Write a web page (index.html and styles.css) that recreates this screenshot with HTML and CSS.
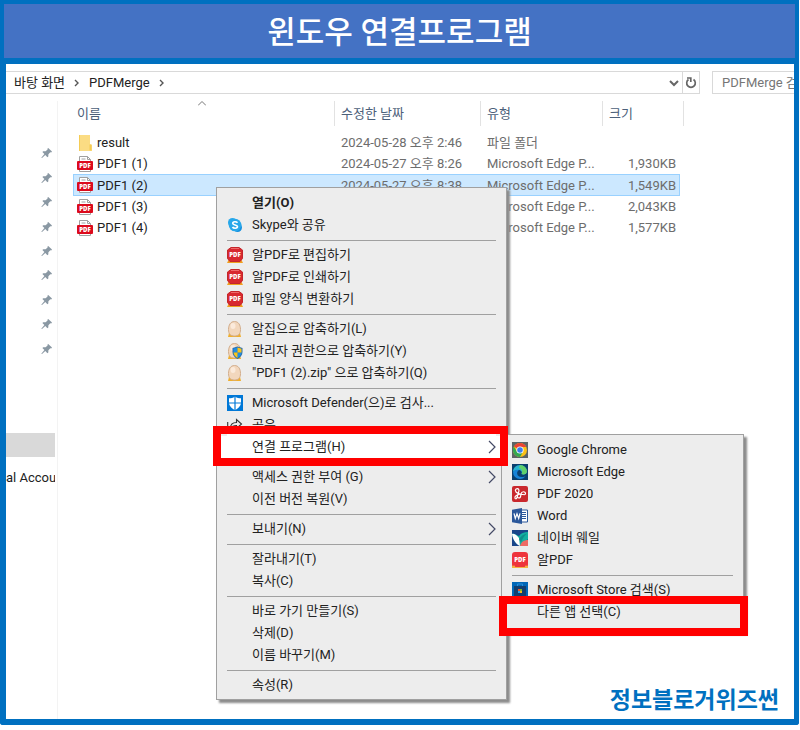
FILE: index.html
```html
<!DOCTYPE html>
<html lang="ko">
<head>
    <meta charset="UTF-8">
    <meta name="viewport" content="width=device-width, initial-scale=1.0">
    <title>윈도우 연결프로그램</title>
    <link rel="stylesheet" href="styles.css">
</head>
<body>
    <!-- Shared icons -->
    <svg class="sprite" aria-hidden="true">
        <symbol id="pin" viewBox="0 0 12 12">
            <path d="M7.2 1 11 4.600 10.200 5.400 9.300 5.200 7.400 7.200 7.300 9.500 6.400 10.200 4.300 8 1 11 .5 11 .5 10.500 3.400 7.100 1.400 5 2.200 4.200 4.600 4.300 6.600 2.500 6.400 1.700Z" fill="#8a98a3"/>
        </symbol>
        <symbol id="pdf-file" viewBox="0 0 16 16">
            <path d="M2.500.5h8l3 3v12h-11z" fill="#fff" stroke="#a0a0a0"/>
            <path d="M10.500.5v3h3M4.500 3h4" fill="none" stroke="#a0a0a0"/>
            <rect y="5" width="16" height="9" rx="1" fill="#dc0a1c"/>
            <text x="8" y="12" class="icon-text">PDF</text>
        </symbol>
        <symbol id="alpdf" viewBox="0 0 16 16">
            <path d="M0 16 2 12h12l2 4z" fill="#f0a020"/>
            <path d="M4 .5h8L15.500 3v8.500L13 14.500H3L.5 11.500V3z" fill="#d8292f" stroke="#c4262b"/>
            <path d="M4 1.500h8" stroke="#ef6a6a"/>
            <text x="8" y="10" class="icon-text">PDF</text>
        </symbol>
        <symbol id="egg" viewBox="0 0 16 16">
            <path d="M1 16 2 12h11l1 4z" fill="#f0ae2c"/>
            <path d="M7.500.5C11.500.5 13.500 4 13.500 8.500S11.500 15 7.500 15 1.500 13 1.500 8.500 3.500.5 7.500.5z" fill="#f2d7bd" stroke="#d3ae8d"/>
            <ellipse cx="6" cy="5" rx="2.500" ry="3" fill="#fbeadb"/>
        </symbol>
        <symbol id="arrow" viewBox="0 0 8 14">
            <path d="M1 1l6 6-6 6" fill="none" stroke="#444a66" stroke-width="1.200"/>
        </symbol>
    </svg>

    <header class="title-bar">
        <h1>윈도우 연결프로그램</h1>
    </header>

    <main class="explorer">
        <div class="toolbar">
            <nav class="address" aria-label="경로">
                <a href="#">바탕 화면</a>
                <svg class="crumb" viewBox="0 0 6 8"><path d="M1 1l3 3-3 3" fill="none" stroke="#555" stroke-width="1.400"/></svg>
                <a href="#">PDFMerge</a>
                <svg class="crumb" viewBox="0 0 6 8"><path d="M1 1l3 3-3 3" fill="none" stroke="#555" stroke-width="1.400"/></svg>
                <button class="history" aria-label="이전 위치">
                    <svg width="10" height="8" viewBox="0 0 10 8"><path d="M1 2l4 4 4-4" fill="none" stroke="#666" stroke-width="2"/></svg>
                </button>
                <button class="refresh" aria-label="새로 고침">
                    <svg width="12" height="13" viewBox="0 0 12 13"><path d="M8.500 3.500a4.300 4.300 0 1 1-5 0M2 2h3.800v4" fill="none" stroke="#666" stroke-width="1.700"/></svg>
                </button>
            </nav>
            <input class="search" type="text" placeholder="PDFMerge 검색" aria-label="PDFMerge 검색">
        </div>

        <div class="content">
            <aside class="sidebar">
                <ul class="pins">
                    <li><svg><use href="#pin"/></svg></li>
                    <li><svg><use href="#pin"/></svg></li>
                    <li><svg><use href="#pin"/></svg></li>
                    <li><svg><use href="#pin"/></svg></li>
                    <li><svg><use href="#pin"/></svg></li>
                    <li><svg><use href="#pin"/></svg></li>
                    <li><svg><use href="#pin"/></svg></li>
                    <li><svg><use href="#pin"/></svg></li>
                    <li><svg><use href="#pin"/></svg></li>
                </ul>
                <div class="current"></div>
                <a class="account" href="#">al Account</a>
            </aside>

            <div class="files">
                <table>
                    <thead>
                        <tr>
                            <th class="col-name">이름
                                <svg class="sort" viewBox="0 0 8 5"><path d="M0 4.500l4-4 4 4" fill="none" stroke="#777"/></svg>
                            </th>
                            <th class="col-date">수정한 날짜</th>
                            <th class="col-type">유형</th>
                            <th class="col-size">크기</th>
                            <th class="col-end"></th>
                        </tr>
                    </thead>
                    <tbody>
                        <tr>
                            <td><span class="name"><svg viewBox="0 0 16 16"><path d="M2 0h11v9l2 1v6H2z" fill="#fbdc83"/><path d="M2 0h1v16H2zM12.500 9.500h2v6h-2z" fill="#f5cc55"/></svg>result</span></td>
                            <td>2024-05-28 오후 2:46</td>
                            <td>파일 폴더</td>
                            <td></td>
                        </tr>
                        <tr>
                            <td><span class="name"><svg><use href="#pdf-file"/></svg>PDF1 (1)</span></td>
                            <td>2024-05-27 오후 8:26</td>
                            <td>Microsoft Edge P...</td>
                            <td class="size">1,930KB</td>
                        </tr>
                        <tr class="selected">
                            <td><span class="name"><svg><use href="#pdf-file"/></svg>PDF1 (2)</span></td>
                            <td>2024-05-27 오후 8:38</td>
                            <td>Microsoft Edge P...</td>
                            <td class="size">1,549KB</td>
                        </tr>
                        <tr>
                            <td><span class="name"><svg><use href="#pdf-file"/></svg>PDF1 (3)</span></td>
                            <td></td>
                            <td>Microsoft Edge P...</td>
                            <td class="size">2,043KB</td>
                        </tr>
                        <tr>
                            <td><span class="name"><svg><use href="#pdf-file"/></svg>PDF1 (4)</span></td>
                            <td></td>
                            <td>Microsoft Edge P...</td>
                            <td class="size">1,577KB</td>
                        </tr>
                    </tbody>
                </table>
            </div>
        </div>
        <p class="signature">정보블로거위즈썬</p>
    </main>

    <!-- Context menu -->
    <div class="menu menu-main">
        <button class="item default"><span class="icon"></span>열기(O)</button>
        <button class="item">
            <svg class="icon" viewBox="0 0 16 16"><circle cx="5.500" cy="5.500" r="4.500" fill="#28a8ea"/><circle cx="10.500" cy="10.500" r="4.500" fill="#1490df"/><circle cx="8" cy="8" r="6.300" fill="#28a8ea"/><path d="M10.500 5.800C9.500 4.300 5.700 4.300 5.700 6.300c0 2 4.800 1.200 4.800 3.300 0 2-4 2.100-5 .4" fill="none" stroke="#fff" stroke-width="1.600"/></svg>
            Skype와 공유
        </button>
        <hr>
        <button class="item"><svg class="icon"><use href="#alpdf"/></svg>알PDF로 편집하기</button>
        <button class="item"><svg class="icon"><use href="#alpdf"/></svg>알PDF로 인쇄하기</button>
        <button class="item"><svg class="icon"><use href="#alpdf"/></svg>파일 양식 변환하기</button>
        <hr>
        <button class="item"><svg class="icon"><use href="#egg"/></svg>알집으로 압축하기(L)</button>
        <button class="item">
            <svg class="icon" viewBox="0 0 16 16"><use href="#egg"/><path d="M10.500 3.500l5 1.500v4c0 3-2 5.500-5 7-3-1.500-5-4-5-7V5z" fill="#2a6fb0"/><path d="M10.500 4.500V9.500H6.500V5.700zM10.500 9.500h4c-.3 2.500-2 4.300-4 5.500z" fill="#1f8fe6"/><path d="M10.500 4.500V9.500h4V5.700zM10.500 9.500h-4c.3 2.500 2 4.300 4 5.500z" fill="#f8c51c"/></svg>
            관리자 권한으로 압축하기(Y)
        </button>
        <button class="item"><svg class="icon"><use href="#egg"/></svg>"PDF1 (2).zip" 으로 압축하기(Q)</button>
        <hr>
        <button class="item">
            <svg class="icon" viewBox="0 0 16 16"><path d="M0 0h16v16H0z" fill="#0078d7"/><path d="M8 1.500c2 1.500 4 1.800 6 1.800v4.200c0 3.500-3 6-6 7.500-3-1.500-6-4-6-7.500V3.300c2 0 4-.3 6-1.800z" fill="#fff"/><path d="M8 1v14M1.500 8h13" stroke="#0078d7" stroke-width="1.200"/></svg>
            Microsoft Defender(으)로 검사...
        </button>
        <button class="item">
            <svg class="icon" viewBox="0 0 16 16"><path d="M.7 5v10.300h11V12M3.500 11c0-4 2.500-5.500 6-5.500V2.500L14.500 7l-5 4.500v-3c-3 0-4.500.5-6 2.500z" fill="none" stroke="#333" stroke-width="1.100"/></svg>
            공유
        </button>
        <button class="item open"><span class="icon"></span>연결 프로그램(H)<svg class="more"><use href="#arrow"/></svg></button>
        <hr>
        <button class="item"><span class="icon"></span>액세스 권한 부여 (G)<svg class="more"><use href="#arrow"/></svg></button>
        <button class="item"><span class="icon"></span>이전 버전 복원(V)</button>
        <hr>
        <button class="item"><span class="icon"></span>보내기(N)<svg class="more"><use href="#arrow"/></svg></button>
        <hr>
        <button class="item"><span class="icon"></span>잘라내기(T)</button>
        <button class="item"><span class="icon"></span>복사(C)</button>
        <hr>
        <button class="item"><span class="icon"></span>바로 가기 만들기(S)</button>
        <button class="item"><span class="icon"></span>삭제(D)</button>
        <button class="item"><span class="icon"></span>이름 바꾸기(M)</button>
        <hr>
        <button class="item"><span class="icon"></span>속성(R)</button>
    </div>

    <!-- Open with -->
    <div class="menu menu-sub">
        <button class="item">
            <svg class="icon" viewBox="0 0 16 16"><path d="M0 0h16v16H0z" fill="#5d6466"/><circle cx="8" cy="8" r="7" fill="#fbc116"/><path d="M8 8 1.900 4.500A7 7 0 0 1 14.100 4.500L14 5H8z" fill="#ea4335"/><path d="M1.900 4.500A7 7 0 0 0 8 15l3-5.300L5 9.700z" fill="#34a853"/><circle cx="8" cy="8" r="3.600" fill="#fff"/><circle cx="8" cy="8" r="2.800" fill="#3b7ded"/></svg>
            Google Chrome
        </button>
        <button class="item">
            <svg class="icon" viewBox="0 0 16 16"><path d="M0 0h16v16H0z" fill="#0a3f6e"/><path d="M1 8C1 4 4 1 8 1s7 3 7 6.500c0 3-4 3.500-5.500 2.500C10.500 8 9 6 6.500 6 4 6 1.500 7 1 8z" fill="#27b3cf"/><path d="M8 1c4 0 7 3 7 6.500 0 3-4 3.500-5.500 2.500C11 8 10 5 7 4z" fill="#5fd06a"/><path d="M1 8c.5-1.500 3-3 6-2-3 1.500-2.500 7 2.500 7 2 0 3.500-.5 4.500-1.500C12.500 14 10.500 15 8 15a7 7 0 0 1-7-7z" fill="#1683d8"/></svg>
            Microsoft Edge
        </button>
        <button class="item">
            <svg class="icon" viewBox="0 0 16 16"><rect width="16" height="16" rx="2" fill="#c9282d"/><path d="M4 3c3-1 3.500 1 2.500 3.500L5 11.500c-.6 2-2.500 1.500-2-.5.5-1.500 3-2.500 6-3M4 3c-1.800 2 .5 4.300 4 5 3 .6 5.500 1.500 5.500-.5 0-2.300-4-2.500-4.500.5-.5 2 0 4-2 4-1.500 0-2-1.500-1.500-3" fill="none" stroke="#fff" stroke-width="1.200"/></svg>
            PDF 2020
        </button>
        <button class="item">
            <svg class="icon" viewBox="0 0 16 16"><path d="M9 2h6.500v12H9z" fill="#fff" stroke="#2b579a"/><path d="M10 4.500h4M10 6.500h4M10 8.500h4M10 10.500h4" stroke="#2b579a"/><path d="M0 1.800 10 0v16L0 14.200z" fill="#2b579a"/><path d="M2 5.300l1.300 5.200L5 5.800l1.700 4.700L8 5.300" fill="none" stroke="#fff" stroke-width="1.200"/></svg>
            Word
        </button>
        <button class="item">
            <svg class="icon" viewBox="0 0 16 16"><path d="M0 0h16v16H0z" fill="#19468a"/><path d="M0 4c3-1 5 2 7 2 2-3 5-4 9-4v7L9 16C4 14 1 10 0 4z" fill="#12b0a0"/><path d="M0 4c3-1 5 2 7 4l1 8C4 14 1 10 0 4z" fill="#fff"/><path d="M7 9c2-3 5-5 8-5.500-3 2.500-5 6-6 9z" fill="#0d8f8a"/><path d="M8 16c1-4 4-6 8-6v6z" fill="#ee6b65"/></svg>
            네이버 웨일
        </button>
        <button class="item">
            <svg class="icon" viewBox="0 0 16 16"><path d="M0 12h16v4H0z" fill="#f5b544"/><rect width="16" height="15" rx="3" fill="#ee343c"/><path d="M0 16l2-3 2 3zM12 16l2-3 2 3z" fill="#f5b544"/><text x="8" y="10" class="icon-text">PDF</text></svg>
            알PDF
        </button>
        <hr>
        <button class="item">
            <svg class="icon" viewBox="0 0 16 16"><path d="M0 0h16v16H0z" fill="#0067b8"/><path d="M2 4h12v12H2z" fill="#123e70"/><path d="M5.500 4V2h5v2" fill="none" stroke="#2a8fd8"/><path d="M6 7h2v2H6z" fill="#e8562a"/><path d="M8 7h2v2H8z" fill="#80b82a"/><path d="M6 9h2v2H6z" fill="#2aa1e8"/><path d="M8 9h2v2H8z" fill="#f5ba19"/></svg>
            Microsoft Store 검색(S)
        </button>
        <button class="item"><span class="icon"></span>다른 앱 선택(C)</button>
    </div>

    <!-- Red marks around the two steps -->
    <div class="mark mark-open-with"></div>
    <div class="mark mark-other-app"></div>
</body>
</html>
```
FILE: styles.css
```css
* {
    box-sizing: border-box;
}
body {
    position: relative;
    display: flex;
    flex-direction: column;
    min-height: 100vh;
    margin: 0;
    padding: 0 1px 5px 0;
    background: #fff;
    color: #222;
    font-family: Roboto, "Noto Sans CJK KR", sans-serif;
    font-size: 13px;
    line-height: 20px;
}
a {
    color: inherit;
    text-decoration: none;
}
button {
    padding: 0;
    border: none;
    background: none;
    color: inherit;
    font: inherit;
}
svg {
    flex: none;
}
.sprite {
    display: none;
}
.icon-text {
    fill: #fff;
    font-family: "Open Sans", sans-serif;
    font-size: 6px;
    font-weight: 800;
    text-anchor: middle;
}

/* Title */
.title-bar {
    padding: 7px 0 3px;
    border: 4px solid #0070c0;
    border-bottom-width: 6px;
    background: #4472c4;
    text-align: center;
}
.title-bar h1 {
    margin: 0;
    color: #fff;
    font-size: 31px;
    font-weight: 500;
    line-height: 44px;
}

/* Explorer window */
.explorer {
    position: relative;
    display: flex;
    flex: 1;
    flex-direction: column;
    border: 6px solid #0070c0;
    border-top: none;
    border-right-width: 5px;
    border-radius: 0 0 3px 3px;
    overflow: hidden;
}
.toolbar {
    display: flex;
    gap: 12px;
    padding-top: 7px;
}
.address {
    display: flex;
    flex: 1;
    align-items: center;
    gap: 9px;
    height: 23px;
    padding-left: 8px;
    border: 1px solid #d9d9d9;
    border-left: none;
}
.crumb {
    width: 6px;
    height: 8px;
}
.history {
    display: flex;
    margin-left: auto;
    margin-right: -6px;
}
.refresh {
    display: flex;
    align-items: center;
    justify-content: center;
    width: 17px;
    height: 21px;
    border-left: 1px solid #d9d9d9;
}
.search {
    width: 82px;
    height: 23px;
    padding: 0 0 0 9px;
    border: 1px solid #d9d9d9;
    border-right: none;
    font: inherit;
}
.search::placeholder {
    color: #767676;
}
.content {
    display: flex;
    flex: 1;
    padding-top: 7px;
}

/* Navigation pane */
.sidebar {
    width: 52px;
    padding-top: 40px;
    border-right: 1px solid #f3f3f3;
}
.pins {
    display: flex;
    flex-direction: column;
    height: 220px;
    margin: 0;
    padding: 0 4px 0 0;
    list-style: none;
}
.pins li {
    display: flex;
    flex: 1;
    align-items: center;
    justify-content: flex-end;
}
.pins svg {
    width: 12px;
    height: 12px;
}
.current {
    height: 24px;
    margin: 72px 2px 11px 0;
    background: #d9d9d9;
}
.account {
    display: block;
    width: 49px;
    overflow: hidden;
    white-space: nowrap;
}

/* File list */
.files {
    padding-left: 15px;
}
table {
    width: 611px;
    table-layout: fixed;
    border-collapse: separate;
    border-spacing: 0;
}
th {
    position: relative;
    height: 25px;
    padding: 0 0 0 6px;
    border-left: 1px solid #e2e2e2;
    color: #4c607a;
    font-weight: 400;
    text-align: left;
}
.col-name {
    width: 261px;
    padding-left: 4px;
    border-left: none;
}
.col-date {
    width: 146px;
}
.col-type {
    width: 122px;
}
.col-size {
    width: 78px;
}
.col-end {
    width: 4px;
    padding: 0;
    border-left: none;
    border-right: 1px solid #e2e2e2;
}
.sort {
    position: absolute;
    top: 0;
    left: 125px;
    width: 8px;
    height: 5px;
}
tbody::before {
    content: "";
    display: table-row;
    height: 6px;
}
td {
    height: 21px;
    padding: 0 4px 0 7px;
    border: 1px solid transparent;
    border-width: 1px 0;
    color: #6d6d6d;
    line-height: 19px;
    white-space: nowrap;
}
td:first-child {
    padding-left: 4px;
    color: #222;
}
.size {
    text-align: right;
}
.name {
    display: flex;
    align-items: center;
    gap: 4px;
}
.name svg {
    width: 16px;
    height: 16px;
}
.selected td {
    height: 22px;
    border-color: #99d1ff;
    background: #cce8ff;
}
.selected td:first-child {
    padding-left: 3px;
    border-left-width: 1px;
}
.selected td:last-child {
    padding-right: 3px;
    border-right-width: 1px;
}
.signature {
    position: absolute;
    right: 15px;
    bottom: 2px;
    margin: 0;
    color: #0070c0;
    font-size: 23px;
    font-weight: 700;
    line-height: 32px;
}

/* Menus */
.menu {
    position: absolute;
    padding: 4px 10px 3px;
    border: 1px solid #a0a0a0;
    background: #ededed;
    box-shadow: 3px 3px 2px #8c8c8c;
}
.menu-main {
    top: 187px;
    left: 216px;
    width: 291px;
}
.menu-sub {
    top: 434px;
    left: 501px;
    width: 243px;
    padding-bottom: 8px;
}
.item {
    display: flex;
    align-items: center;
    gap: 9px;
    width: 100%;
    height: 22px;
    text-align: left;
    white-space: nowrap;
}
.item.default {
    font-weight: 700;
}
.item.open {
    background: #fff;
    box-shadow: -8px 0 #fff, 8px 0 #fff, 0 -2px #fff;
}
.icon {
    flex: none;
    width: 16px;
    height: 16px;
}
.more {
    width: 8px;
    height: 14px;
    margin-left: auto;
}
hr {
    height: 1px;
    margin: 4px 0 3px;
    border: none;
    background: #a0a0a0;
}

/* Red marks */
.mark {
    position: absolute;
    height: 40px;
    border: 8px solid #f00;
    pointer-events: none;
}
.mark-open-with {
    top: 426px;
    left: 213px;
    width: 295px;
}
.mark-other-app {
    top: 596px;
    left: 499px;
    width: 249px;
}
```
